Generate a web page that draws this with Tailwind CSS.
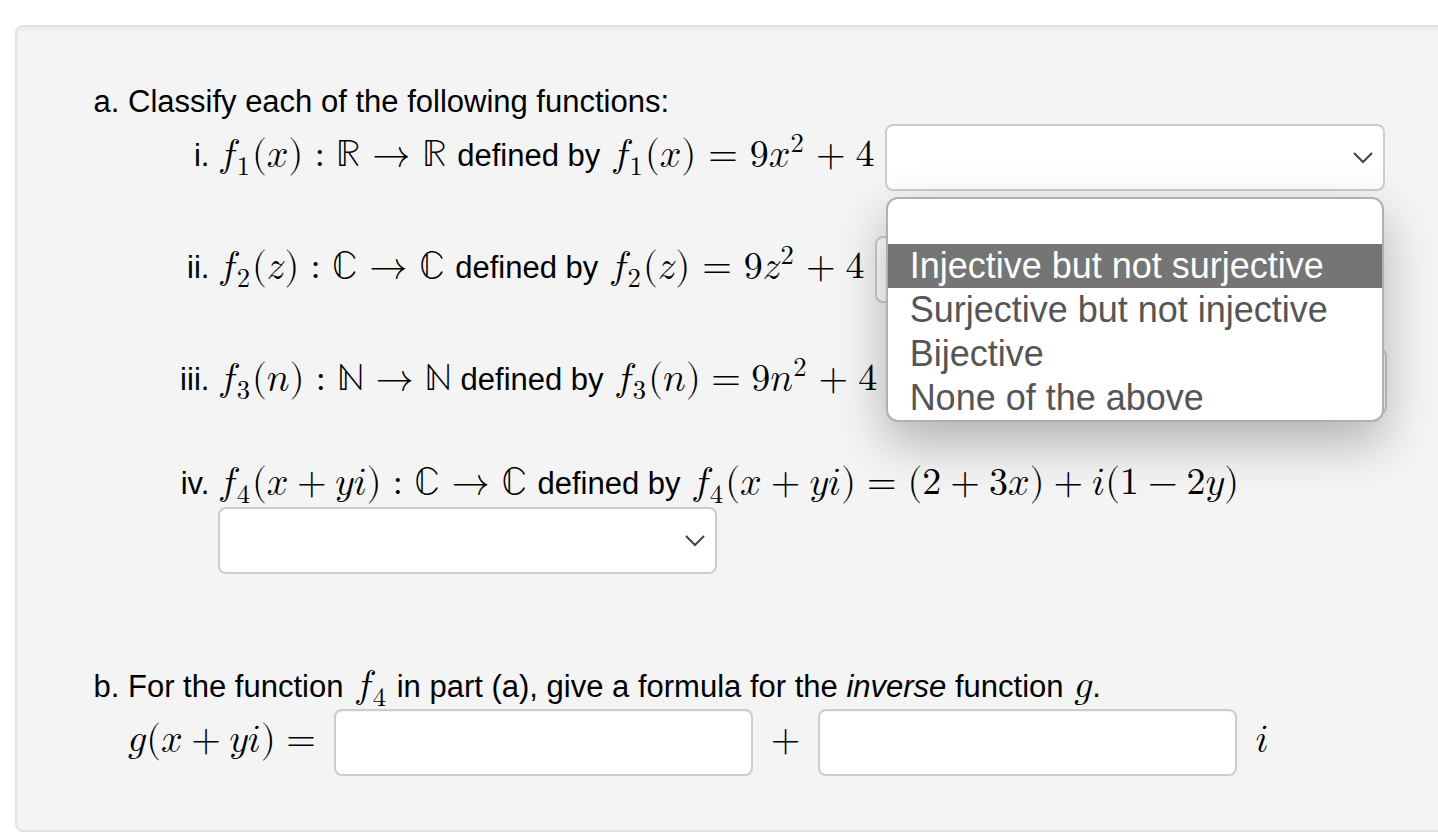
<!DOCTYPE html>
<html lang="en">
  <head>
    <meta charset="UTF-8" />
    <meta name="viewport" content="width=device-width, initial-scale=1.0" />
    <title>Classify Functions</title>
    <script src="https://cdn.jsdelivr.net/npm/@tailwindcss/browser@4"></script>
  </head>
  <body class="bg-white text-black overflow-x-hidden font-['Liberation_Sans',Arial,sans-serif]">
    <!-- Question panel, runs off the right edge -->
    <main
      class="mt-[25px] ml-[15px] -mr-4 pt-[52px] pb-[54px] pl-[111px] pr-4 bg-[#f4f4f4] border-2 border-[#e3e3e3] rounded-lg inset-shadow-sm text-[31px] leading-[45px] [&_math]:text-[38px] [&_math]:leading-none [&_math]:font-['Latin_Modern_Math',math]"
    >
      <ol class="list-[lower-alpha]">
        <!-- Part a -->
        <li class="mb-[90px]">
          <p>Classify each of the following functions:</p>
          <ol class="list-[lower-roman] pl-[90px] space-y-[45px]">
            <li>
              <div class="flex items-start gap-[10px]">
                <label for="f1" class="pt-[9px] whitespace-nowrap">
                  <math><msub><mi>f</mi><mn>1</mn></msub><mrow><mo stretchy="false">(</mo><mi>x</mi><mo stretchy="false">)</mo></mrow><mo lspace="11px" rspace="11px">:</mo><mi>ℝ</mi><mo stretchy="false" lspace="12px" rspace="12px">→</mo><mi>ℝ</mi><mspace width="2px" /></math>
                  defined by
                  <math><mspace width="2px" /><msub><mi>f</mi><mn>1</mn></msub><mrow><mo stretchy="false">(</mo><mi>x</mi><mo stretchy="false">)</mo></mrow><mo lspace="12px" rspace="12px">=</mo><mn>9</mn><msup><mi>x</mi><mn>2</mn></msup><mo lspace="10px" rspace="10px">+</mo><mn>4</mn></math>
                </label>
                <div class="relative shrink-0">
                  <select id="f1" class="block appearance-none w-[500px] h-[67px] px-5 bg-white border-2 border-[#ccc] rounded-lg text-[36px] text-[#555]">
                    <option></option>
                    <option>Injective but not surjective</option>
                    <option>Surjective but not injective</option>
                    <option>Bijective</option>
                    <option>None of the above</option>
                  </select>
                  <svg class="absolute right-3 top-7 w-5 h-3 pointer-events-none" viewBox="0 0 20 12" fill="none" stroke="#444" stroke-width="2"><path d="M1 1l9 9 9-9" /></svg>

                  <!-- Open menu -->
                  <ul role="listbox" aria-label="Classification of f1" class="absolute z-10 left-px right-px top-[73px] overflow-hidden bg-white border-2 border-[#b0b0b0] rounded-xl shadow-[0_20px_50px_rgba(0,0,0,0.28)] text-[36px] leading-[44px] text-[#555]">
                    <li role="option" class="block h-[45px]"></li>
                    <li role="option" aria-selected="true" class="block px-[22px] bg-[#757575] text-white">Injective but not surjective</li>
                    <li role="option" class="block px-[22px]">Surjective but not injective</li>
                    <li role="option" class="block px-[22px]">Bijective</li>
                    <li role="option" class="block px-[22px]">None of the above</li>
                  </ul>
                </div>
              </div>
            </li>
            <li>
              <div class="flex items-start gap-[10px]">
                <label for="f2" class="pt-[9px] whitespace-nowrap">
                  <math><msub><mi>f</mi><mn>2</mn></msub><mrow><mo stretchy="false">(</mo><mi>z</mi><mo stretchy="false">)</mo></mrow><mo lspace="11px" rspace="11px">:</mo><mi>ℂ</mi><mo stretchy="false" lspace="12px" rspace="12px">→</mo><mi>ℂ</mi><mspace width="2px" /></math>
                  defined by
                  <math><mspace width="2px" /><msub><mi>f</mi><mn>2</mn></msub><mrow><mo stretchy="false">(</mo><mi>z</mi><mo stretchy="false">)</mo></mrow><mo lspace="12px" rspace="12px">=</mo><mn>9</mn><msup><mi>z</mi><mn>2</mn></msup><mo lspace="10px" rspace="10px">+</mo><mn>4</mn></math>
                </label>
                <div class="relative shrink-0">
                  <select id="f2" class="block appearance-none w-[500px] h-[67px] px-5 bg-white border-2 border-[#ccc] rounded-lg text-[36px] text-[#555]">
                    <option></option>
                    <option>Injective but not surjective</option>
                    <option>Surjective but not injective</option>
                    <option>Bijective</option>
                    <option>None of the above</option>
                  </select>
                  <svg class="absolute right-3 top-7 w-5 h-3 pointer-events-none" viewBox="0 0 20 12" fill="none" stroke="#444" stroke-width="2"><path d="M1 1l9 9 9-9" /></svg>
                </div>
              </div>
            </li>
            <li>
              <div class="flex items-start gap-[10px]">
                <label for="f3" class="pt-[9px] whitespace-nowrap">
                  <math><msub><mi>f</mi><mn>3</mn></msub><mrow><mo stretchy="false">(</mo><mi>n</mi><mo stretchy="false">)</mo></mrow><mo lspace="11px" rspace="11px">:</mo><mi>ℕ</mi><mo stretchy="false" lspace="11px" rspace="11px">→</mo><mi>ℕ</mi></math>
                  defined by
                  <math><mspace width="2px" /><msub><mi>f</mi><mn>3</mn></msub><mrow><mo stretchy="false">(</mo><mi>n</mi><mo stretchy="false">)</mo></mrow><mo>=</mo><mn>9</mn><msup><mi>n</mi><mn>2</mn></msup><mo lspace="10px" rspace="10px">+</mo><mn>4</mn></math>
                </label>
                <div class="relative shrink-0">
                  <select id="f3" class="block appearance-none w-[500px] h-[67px] px-5 bg-white border-2 border-[#ccc] rounded-lg text-[36px] text-[#555]">
                    <option></option>
                    <option>Injective but not surjective</option>
                    <option>Surjective but not injective</option>
                    <option>Bijective</option>
                    <option>None of the above</option>
                  </select>
                  <svg class="absolute right-3 top-7 w-5 h-3 pointer-events-none" viewBox="0 0 20 12" fill="none" stroke="#444" stroke-width="2"><path d="M1 1l9 9 9-9" /></svg>
                </div>
              </div>
            </li>
            <li>
              <label for="f4" class="block py-px whitespace-nowrap">
                <math><msub><mi>f</mi><mn>4</mn></msub><mrow><mo stretchy="false">(</mo><mi>x</mi><mo>+</mo><mi>y</mi><mi>i</mi><mo stretchy="false">)</mo></mrow><mo lspace="11px" rspace="11px">:</mo><mi>ℂ</mi><mo stretchy="false" lspace="12px" rspace="12px">→</mo><mi>ℂ</mi><mspace width="2px" /></math>
                defined by
                <math><mspace width="2px" /><msub><mi>f</mi><mn>4</mn></msub><mrow><mo stretchy="false">(</mo><mi>x</mi><mo lspace="9px" rspace="9px">+</mo><mi>y</mi><mi>i</mi><mo stretchy="false">)</mo></mrow><mo lspace="11px" rspace="11px">=</mo><mrow><mo stretchy="false">(</mo><mn>2</mn><mo lspace="9px" rspace="9px">+</mo><mn>3</mn><mi>x</mi><mo stretchy="false">)</mo></mrow><mo lspace="9px" rspace="9px">+</mo><mi>i</mi><mrow><mo stretchy="false">(</mo><mn>1</mn><mo lspace="9px" rspace="9px">−</mo><mn>2</mn><mi>y</mi><mo stretchy="false">)</mo></mrow></math>
              </label>
              <div class="relative w-[499px]">
                <select id="f4" class="block appearance-none w-full h-[67px] px-5 bg-white border-2 border-[#ccc] rounded-lg text-[36px] text-[#555]">
                  <option></option>
                  <option>Injective but not surjective</option>
                  <option>Surjective but not injective</option>
                  <option>Bijective</option>
                  <option>None of the above</option>
                </select>
                <svg class="absolute right-3 top-7 w-5 h-3 pointer-events-none" viewBox="0 0 20 12" fill="none" stroke="#444" stroke-width="2"><path d="M1 1l9 9 9-9" /></svg>
              </div>
            </li>
          </ol>
        </li>

        <!-- Part b -->
        <li>
          <p>
            For the function
            <math><mspace width="2px" /><msub><mi>f</mi><mn>4</mn></msub></math>
            in part (a), give a formula for the <em>inverse</em> function
            <math><mspace width="2px" /><mi>g</mi></math>.
          </p>
          <div class="flex items-start gap-[18px]">
            <label for="re" class="pt-[9px] whitespace-nowrap"><math><mi>g</mi><mrow><mo stretchy="false">(</mo><mi>x</mi><mo>+</mo><mi>y</mi><mi>i</mi><mo stretchy="false">)</mo></mrow><mo rspace="0">=</mo></math></label>
            <input id="re" type="text" class="w-[419px] h-[67px] px-5 bg-white border-2 border-[#ccc] rounded-lg inset-shadow-xs text-[36px] text-[#555]" />
            <label for="im" class="pt-[9px]"><math><mo lspace="0" rspace="0">+</mo></math></label>
            <input id="im" type="text" class="w-[419px] h-[67px] px-5 bg-white border-2 border-[#ccc] rounded-lg inset-shadow-xs text-[36px] text-[#555]" />
            <span class="pt-[9px]"><math><mi>i</mi></math></span>
          </div>
        </li>
      </ol>
    </main>
  </body>
</html>
